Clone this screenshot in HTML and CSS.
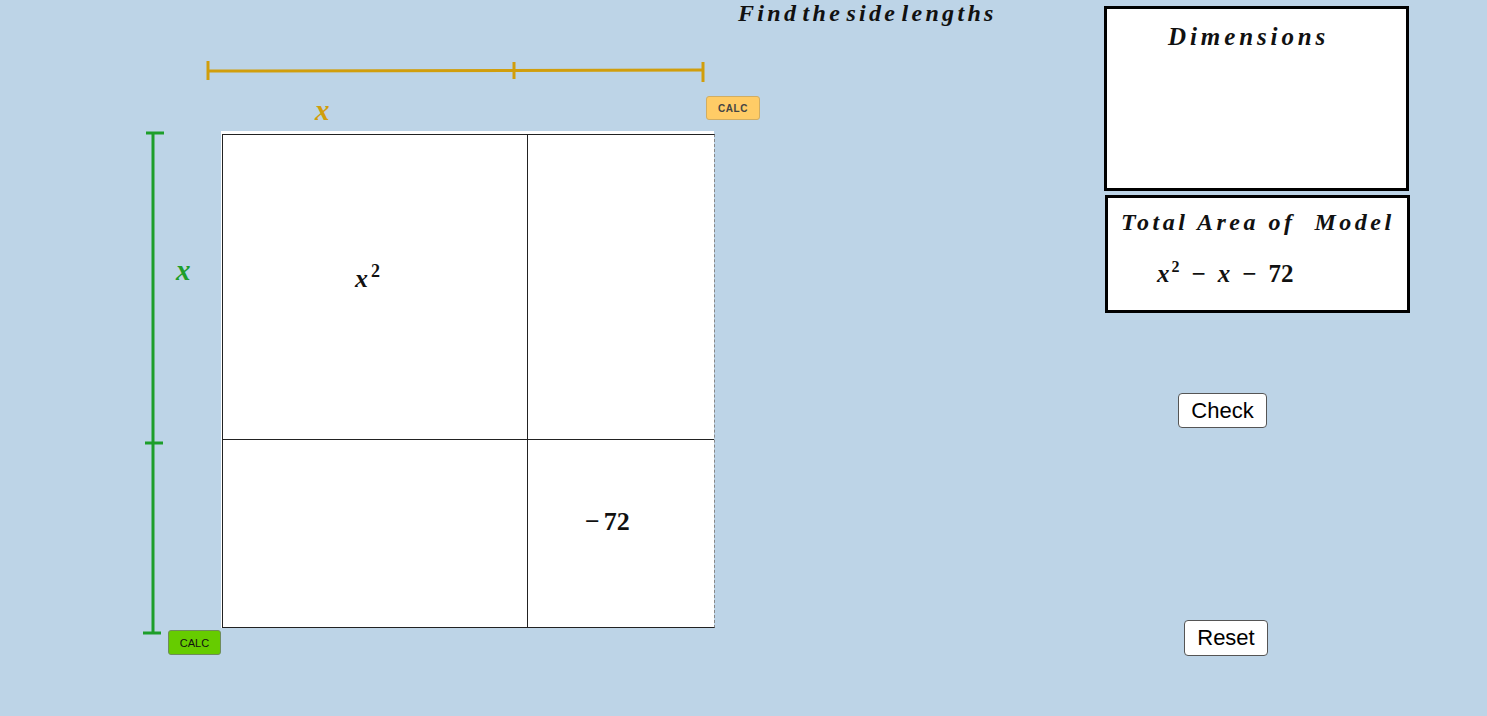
FILE: index.html
```html
<!DOCTYPE html>
<html>
<head>
<meta charset="utf-8">
<link rel="stylesheet" href="styles.css">
</head>
<body>
<div class="canvas">
  <div class="title">Find the side lengths</div>

  <svg class="measures" width="800" height="716" viewBox="0 0 800 716">
    <g stroke="#d19e0c" stroke-width="3">
      <line x1="207" y1="71" x2="703" y2="70"/>
      <line x1="208" y1="61" x2="208" y2="80"/>
      <line x1="514" y1="62" x2="514" y2="79"/>
      <line x1="703" y1="62" x2="703" y2="82"/>
    </g>
    <g stroke="#1d9e2a" stroke-width="3">
      <line x1="153" y1="132" x2="153" y2="633"/>
      <line x1="146" y1="133" x2="164" y2="133"/>
      <line x1="145" y1="443" x2="163" y2="443"/>
      <line x1="143" y1="633" x2="161" y2="633"/>
    </g>
  </svg>

  <div class="label label-top">x</div>
  <div class="label label-left">x</div>

  <button class="calc calc-top">CALC</button>
  <button class="calc calc-left">CALC</button>

  <div class="board">
    <div class="grid">
      <div class="cell c1"><span class="term t-x2">x<sup>2</sup></span></div>
      <div class="cell c2"></div>
      <div class="cell c3"></div>
      <div class="cell c4"><span class="term t-72"><span class="minus">&minus;</span>72</span></div>
    </div>
  </div>

  <div class="panel dims">
    <div class="panel-title">Dimensions</div>
  </div>
  <div class="panel area">
    <div class="panel-title area-title">Total Area of&nbsp; Model</div>
    <div class="expr">x<sup>2</sup><span class="op">&minus;</span>x<span class="op">&minus;</span><span class="num">72</span></div>
  </div>

  <button class="btn btn-check">Check</button>
  <button class="btn btn-reset">Reset</button>
</div>
</body>
</html>
```

FILE: styles.css
```css
html, body {
  margin: 0;
  padding: 0;
  background: #bdd4e7;
}
.canvas {
  position: relative;
  width: 1487px;
  height: 716px;
  overflow: hidden;
  font-family: "Liberation Serif", serif;
}
.title {
  position: absolute;
  left: 738px;
  top: 0;
  font-size: 24px;
  font-style: italic;
  font-weight: bold;
  letter-spacing: 3.3px;
  word-spacing: -6px;
  color: #111;
  white-space: nowrap;
}
.measures {
  position: absolute;
  left: 0;
  top: 0;
}
.label {
  position: absolute;
  font-size: 29px;
  font-style: italic;
  font-weight: bold;
  line-height: 1;
}
.label-top {
  left: 315px;
  top: 96px;
  color: #d19e0c;
}
.label-left {
  left: 176px;
  top: 256px;
  color: #1d9e2a;
}
.calc {
  position: absolute;
  font-family: "Liberation Sans", Arial, sans-serif;
  font-size: 10px;
  padding: 0;
  border-radius: 3px;
  cursor: pointer;
}
.calc-top {
  left: 706px;
  top: 96px;
  width: 54px;
  height: 24px;
  background: #ffcc66;
  border: 1px solid #d1ad62;
  color: #444;
  font-weight: bold;
  letter-spacing: 0.5px;
}
.calc-left {
  left: 168px;
  top: 630px;
  width: 53px;
  height: 25px;
  background: #66cc00;
  border: 1px solid #6f8c5c;
  color: #111;
  font-size: 11px;
}
.board {
  position: absolute;
  left: 221px;
  top: 131px;
  width: 493px;
  height: 497px;
  background: #fff;
}
.grid {
  margin: 3px 0 0 1px;
  display: grid;
  grid-template-columns: 305px 186px;
  grid-template-rows: 305px 187px;
  border-left: 1px solid #222;
  border-top: 1px solid #222;
  border-bottom: 1px solid #222;
  border-right: 1px dashed #888;
  width: 491px;
  box-sizing: content-box;
}
.cell {
  position: relative;
}
.c1 { border-right: 1px solid #222; border-bottom: 1px solid #222; }
.c2 { border-bottom: 1px solid #222; }
.c3 { border-right: 1px solid #222; }
.term {
  position: absolute;
  font-size: 26px;
  font-weight: bold;
  color: #111;
  line-height: 1;
  white-space: nowrap;
}
.t-x2 {
  left: 132px;
  top: 127px;
  font-style: italic;
}
.t-x2 sup {
  font-size: 18px;
  font-style: normal;
  vertical-align: 10px;
  margin-left: 3px;
}
.expr sup {
  font-size: 16px;
  font-style: normal;
  vertical-align: 10px;
  margin-left: 2px;
}
.t-72 {
  left: 57px;
  top: 69px;
}
.minus {
  margin-right: 4px;
}
.panel {
  position: absolute;
  background: #fff;
  border: 3px solid #000;
  box-sizing: border-box;
}
.dims {
  left: 1104px;
  top: 6px;
  width: 305px;
  height: 185px;
}
.area {
  left: 1105px;
  top: 195px;
  width: 305px;
  height: 118px;
}
.panel-title {
  font-size: 25px;
  font-style: italic;
  font-weight: bold;
  letter-spacing: 3.9px;
  color: #111;
  white-space: nowrap;
  line-height: 1.15;
}
.dims .panel-title {
  margin: 14px 0 0 61px;
}
.area-title {
  margin: 11px 0 0 13px;
  font-size: 24px;
  letter-spacing: 3.5px;
}
.expr {
  margin: 22px 0 0 49px;
  font-size: 25px;
  font-weight: bold;
  font-style: italic;
  color: #111;
  white-space: nowrap;
  line-height: 1;
}
.expr .op {
  font-style: normal;
  margin: 0 12px;
}
.expr .num {
  font-style: normal;
}
.btn {
  position: absolute;
  font-family: "Liberation Sans", Arial, sans-serif;
  font-size: 22px;
  background: #fff;
  border: 1px solid #555;
  border-radius: 4px;
  padding: 0;
  color: #000;
}
.btn-check {
  left: 1178px;
  top: 393px;
  width: 89px;
  height: 35px;
}
.btn-reset {
  left: 1184px;
  top: 620px;
  width: 84px;
  height: 36px;
}
```
